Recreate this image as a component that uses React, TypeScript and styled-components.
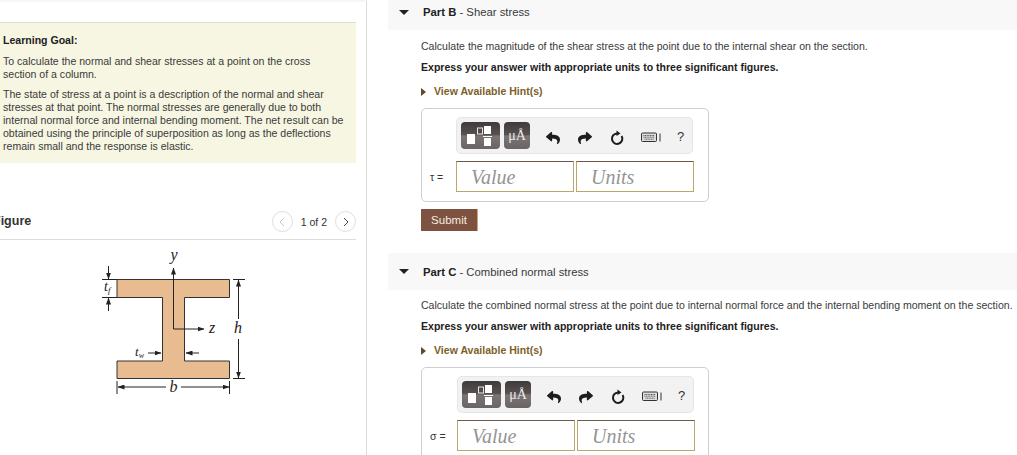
import React from "react";
import styled, { createGlobalStyle } from "styled-components";
import { FaReply, FaShare } from "react-icons/fa";

const GlobalStyle = createGlobalStyle`
  html, body {
    margin: 0;
    padding: 0;
    background: #fff;
    font-family: "Liberation Sans", Arial, sans-serif;
    color: #222;
  }
`;

const Page = styled.div`
  display: flex;
  width: 1017px;
  height: 455px;
  overflow: hidden;
`;

const LeftColumn = styled.div`
  box-sizing: border-box;
  flex: 0 0 367px;
  height: 455px;
  border-top: 2px solid #f6f6f6;
  border-right: 1px solid #dcdcd8;
  padding-top: 20px;
  overflow: hidden;
`;

const GoalBox = styled.div`
  box-sizing: border-box;
  width: 356px;
  height: 141px;
  padding: 11px 8px 0 3px;
  background: #f6f6e2;
  border-top: 1px solid #dfdfd2;
  font-size: 10.55px;
  line-height: 13px;
  color: #3a3a3a;
`;

const GoalTitle = styled.div`
  font-weight: bold;
  color: #222;
  margin-bottom: 8px;
`;

const GoalText = styled.p`
  margin: 0 0 7px;
  white-space: nowrap;
`;

const FigureHeader = styled.div`
  box-sizing: border-box;
  display: flex;
  align-items: center;
  justify-content: space-between;
  width: 356px;
  height: 33px;
  margin-top: 44px;
  padding-bottom: 3px;
  border-bottom: 1px solid #dcdcdc;
`;

const FigureTitle = styled.div`
  margin: 0 0 2px -7px;
  font-size: 12.5px;
  font-weight: bold;
  color: #333;
`;

const Pager = styled.div`
  display: flex;
  align-items: center;
  gap: 8px;
  font-size: 10.5px;
  color: #333;
`;

const PagerButton = styled.span<{ $off?: boolean }>`
  box-sizing: border-box;
  display: flex;
  align-items: center;
  justify-content: center;
  width: 21px;
  height: 21px;
  border: 1px solid #dedede;
  border-radius: 50%;
  color: ${(p) => (p.$off ? "#c4c4c4" : "#444")};
`;

const FigureSvg = styled.svg`
  display: block;
  width: 365px;
  height: 216px;
`;

const RightColumn = styled.div`
  flex: 1;
  min-width: 0;
  padding-left: 21px;
`;

const PartHeader = styled.div<{ $height: number; $shift: number }>`
  box-sizing: border-box;
  display: flex;
  align-items: center;
  height: ${(p) => p.$height}px;
  padding: 0 0 ${(p) => p.$shift}px 11px;
  background: #f8f8f8;
  font-size: 11.3px;
  color: #3a3a3a;
`;

const Caret = styled.span`
  width: 0;
  height: 0;
  margin-right: 14px;
  border-left: 5px solid transparent;
  border-right: 5px solid transparent;
  border-top: 5px solid #222;
`;

const PartLabel = styled.b`
  color: #222;
`;

const PartBody = styled.div`
  padding-left: 33px;
`;

const Prompt = styled.p<{ $top: number }>`
  margin: ${(p) => p.$top}px 0 0;
  font-size: 10.55px;
  line-height: 13px;
  white-space: nowrap;
  color: #3a3a3a;
`;

const Instruction = styled.p`
  margin: 8px 0 0;
  font-size: 10.55px;
  font-weight: bold;
  line-height: 13px;
  color: #222;
`;

const Hint = styled.div`
  display: flex;
  align-items: center;
  gap: 8px;
  margin-top: 11px;
  font-size: 10.55px;
  font-weight: bold;
  line-height: 13px;
  color: #7d5f2a;
`;

const HintCaret = styled.span`
  width: 0;
  height: 0;
  border-top: 4px solid transparent;
  border-bottom: 4px solid transparent;
  border-left: 5px solid #5c4a2a;
`;

const AnswerBox = styled.div`
  box-sizing: border-box;
  width: 288px;
  margin-top: 10px;
  padding: 8px 0 9px;
  border: 1px solid #cfcfcf;
  border-radius: 5px;
`;

const Toolbar = styled.div<{ $indent: number }>`
  box-sizing: border-box;
  display: flex;
  align-items: center;
  width: 237px;
  height: 37px;
  margin-left: ${(p) => p.$indent}px;
  padding: 0 4px;
  background: #f2f2f2;
  border: 1px solid #e6e6e6;
  border-radius: 5px;
`;

const TemplateButton = styled.span<{ $width: number }>`
  display: flex;
  align-items: center;
  justify-content: center;
  width: ${(p) => p.$width}px;
  height: 27px;
  margin-right: 4px;
  padding-top: 1px;
  box-sizing: border-box;
  border-radius: 4px;
  overflow: hidden;
  background: linear-gradient(#3f3b3b 0%, #575151 46%, #7b7474 52%, #6a6464 100%);
  color: #eeeaea;
  font-family: "Liberation Serif", serif;
  font-size: 14px;
`;

const ToolIcon = styled.span<{ $left: number }>`
  display: flex;
  align-items: center;
  margin-left: ${(p) => p.$left}px;
  padding-top: 4px;
  color: #1d1d1d;
  font-size: 14px;
`;

const HelpMark = styled(ToolIcon)`
  padding-top: 2px;
  font-size: 13px;
  color: #333;
`;

const AnswerRow = styled.div`
  display: flex;
  align-items: center;
  margin-top: 7px;
`;

const Symbol = styled.span<{ $width: number }>`
  width: ${(p) => p.$width}px;
  padding-left: 8px;
  box-sizing: border-box;
  font-size: 10.5px;
  color: #333;
  white-space: nowrap;
`;

const Field = styled.div`
  box-sizing: border-box;
  display: flex;
  align-items: center;
  width: 118px;
  height: 31px;
  padding: 1px 0 0 14px;
  background: #fff;
  border: 1px solid #b8a86e;
  border-top-color: #6e5a4a;
  font-family: "Liberation Serif", serif;
  font-style: italic;
  font-size: 20px;
  color: #949494;
  & + & {
    margin-left: 2px;
  }
`;

const Submit = styled.button`
  display: block;
  width: 57px;
  height: 22px;
  margin: 7px 0 22px;
  padding: 0;
  background: #7d5240;
  border: none;
  border-right: 1px solid #c8a878;
  color: #f6eee0;
  font-family: "Liberation Sans", Arial, sans-serif;
  font-size: 11.5px;
`;

const TemplateIcon = () => (
  <svg width="39" height="27" viewBox="0 0 39 27">
    <rect x="6" y="11" width="8" height="10" fill="#fff" />
    <rect x="16.5" y="5" width="5" height="6" fill="none" stroke="#e8e8e8" />
    <rect x="23" y="3" width="7" height="8" fill="#fff" />
    <rect x="22" y="13" width="9" height="1" fill="#fff" />
    <rect x="23" y="15" width="7" height="8" fill="#fff" />
  </svg>
);

const ResetIcon = () => (
  <svg width="15" height="16" viewBox="0 0 15 16">
    <path d="M7 3.5A5.2 5.2 0 1 0 11.6 6" fill="none" stroke="#1d1d1d" strokeWidth="2" />
    <path d="M6.5 0.5L10.5 3.5L6.5 6z" fill="#1d1d1d" />
  </svg>
);

const KeyboardIcon = () => (
  <svg width="22" height="11" viewBox="0 0 22 11">
    <rect x="0.5" y="1" width="15" height="8.5" rx="1" fill="#ddd" stroke="#333" />
    <path d="M2.5 3.5h11M2.5 5.2h11M3.5 7.2h9" stroke="#555" strokeDasharray="1 0.6" />
    <path d="M19 1.5v8" stroke="#333" />
  </svg>
);

type PartProps = {
  letter: string;
  title: string;
  headerHeight: number;
  headerShift: number;
  prompt: string;
  promptTop: number;
  symbol: string;
  symbolWidth: number;
  submit?: boolean;
};

const Part = ({ letter, title, headerHeight, headerShift, prompt, promptTop, symbol, symbolWidth, submit }: PartProps) => (
  <>
    <PartHeader $height={headerHeight} $shift={headerShift}>
      <Caret />
      <span>
        <PartLabel>Part {letter}</PartLabel> - {title}
      </span>
    </PartHeader>
    <PartBody>
      <Prompt $top={promptTop}>{prompt}</Prompt>
      <Instruction>Express your answer with appropriate units to three significant figures.</Instruction>
      <Hint>
        <HintCaret />
        View Available Hint(s)
      </Hint>
      <AnswerBox>
        <Toolbar $indent={symbolWidth}>
          <TemplateButton $width={39}>
            <TemplateIcon />
          </TemplateButton>
          <TemplateButton $width={26}>μÅ</TemplateButton>
          <ToolIcon $left={12}>
            <FaReply />
          </ToolIcon>
          <ToolIcon $left={18}>
            <FaShare />
          </ToolIcon>
          <ToolIcon $left={18}>
            <ResetIcon />
          </ToolIcon>
          <ToolIcon $left={16}>
            <KeyboardIcon />
          </ToolIcon>
          <HelpMark $left={14}>?</HelpMark>
        </Toolbar>
        <AnswerRow>
          <Symbol $width={symbolWidth}>{symbol} =</Symbol>
          <Field>Value</Field>
          <Field>Units</Field>
        </AnswerRow>
      </AnswerBox>
      {submit && <Submit>Submit</Submit>}
    </PartBody>
  </>
);

const BeamFigure = () => (
  <FigureSvg viewBox="0 240 365 216">
    <defs>
      <marker id="tip" markerWidth="7" markerHeight="5" refX="6.5" refY="2.5" orient="auto-start-reverse">
        <path d="M0 0L7 2.5L0 5z" fill="#222" />
      </marker>
    </defs>
    <path
      d="M117 279.5H229.5V297.5H184.5V361H229.5V378.5H117V361H162.5V297.5H117Z"
      fill="#e8bc90"
      stroke="#333"
      strokeWidth="1"
    />
    <g fill="none" stroke="#222" strokeWidth="1">
      <path d="M173.5 329V268" markerEnd="url(#tip)" />
      <path d="M173.5 329H204" markerEnd="url(#tip)" />
      <path d="M108.5 266V279" markerEnd="url(#tip)" />
      <path d="M108.5 311V298" markerEnd="url(#tip)" />
      <path d="M102 279.5H117M102 297.5H117" />
      <path d="M148 353H161" markerEnd="url(#tip)" />
      <path d="M199 353H186" markerEnd="url(#tip)" />
      <path d="M233 279.5H245M233 378.5H245" />
      <path d="M238.5 319V280" markerEnd="url(#tip)" />
      <path d="M238.5 339V378" markerEnd="url(#tip)" />
      <path d="M117 381V394M229.5 381V394" />
      <path d="M166 387H118" markerEnd="url(#tip)" />
      <path d="M181 387H229" markerEnd="url(#tip)" />
    </g>
    <g fontFamily="'Liberation Serif', serif" fontStyle="italic" fill="#222">
      <text x="174" y="260" fontSize="16" textAnchor="middle">y</text>
      <text x="209" y="333" fontSize="16">z</text>
      <text x="234" y="333" fontSize="16">h</text>
      <text x="173.5" y="392" fontSize="16" textAnchor="middle">b</text>
      <text x="104" y="291" fontSize="14">t<tspan fontSize="9" dy="2">f</tspan></text>
      <text x="135" y="356" fontSize="13">t<tspan fontSize="8" dy="2">w</tspan></text>
    </g>
  </FigureSvg>
);

export default function App() {
  return (
    <>
      <GlobalStyle />
      <Page>
        <LeftColumn>
          <GoalBox>
            <GoalTitle>Learning Goal:</GoalTitle>
            <GoalText>
              To calculate the normal and shear stresses at a point on the cross
              <br />
              section of a column.
            </GoalText>
            <GoalText>
              The state of stress at a point is a description of the normal and shear
              <br />
              stresses at that point. The normal stresses are generally due to both
              <br />
              internal normal force and internal bending moment. The net result can be
              <br />
              obtained using the principle of superposition as long as the deflections
              <br />
              remain small and the response is elastic.
            </GoalText>
          </GoalBox>
          <FigureHeader>
            <FigureTitle>Figure</FigureTitle>
            <Pager>
              <PagerButton $off>
                <svg width="8" height="10" viewBox="0 0 8 10"><path d="M6 1L2 5L6 9" fill="none" stroke="currentColor" /></svg>
              </PagerButton>
              <span>1 of 2</span>
              <PagerButton>
                <svg width="8" height="10" viewBox="0 0 8 10"><path d="M2 1L6 5L2 9" fill="none" stroke="currentColor" /></svg>
              </PagerButton>
            </Pager>
          </FigureHeader>
          <BeamFigure />
        </LeftColumn>
        <RightColumn>
          <Part
            letter="B"
            title="Shear stress"
            headerHeight={30}
            headerShift={6}
            prompt="Calculate the magnitude of the shear stress at the point due to the internal shear on the section."
            promptTop={10}
            symbol="τ"
            symbolWidth={34}
            submit
          />
          <Part
            letter="C"
            title="Combined normal stress"
            headerHeight={37}
            headerShift={0}
            prompt="Calculate the combined normal stress at the point due to internal normal force and the internal bending moment on the section."
            promptTop={9}
            symbol="σ"
            symbolWidth={35}
          />
        </RightColumn>
      </Page>
    </>
  );
}
